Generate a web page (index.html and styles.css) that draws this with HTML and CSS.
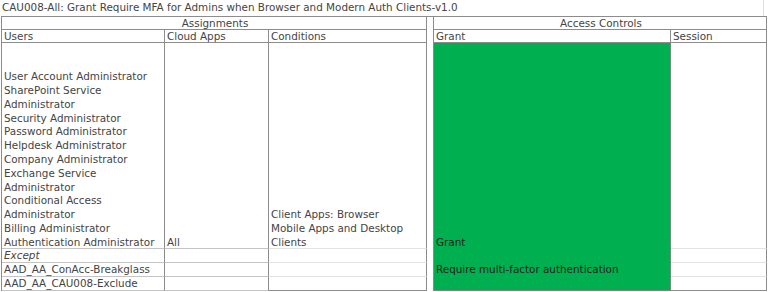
FILE: index.html
```html
<!DOCTYPE html>
<html>
<head>
<meta charset="utf-8">
<link rel="stylesheet" href="styles.css">
</head>
<body>
<div class="title">CAU008-All: Grant Require MFA for Admins when Browser and Modern Auth Clients-v1.0</div>
<div class="sheet">
  <div class="cell group span-assign">Assignments</div>
  <div class="gap"></div>
  <div class="cell group span-access">Access Controls</div>

  <div class="cell head">Users</div>
  <div class="cell head">Cloud Apps</div>
  <div class="cell head">Conditions</div>
  <div class="cell head">Grant</div>
  <div class="cell head">Session</div>

  <div class="cell main dark">
    <span>User Account Administrator</span>
    <span>SharePoint Service</span>
    <span>Administrator</span>
    <span>Security Administrator</span>
    <span>Password Administrator</span>
    <span>Helpdesk Administrator</span>
    <span>Company Administrator</span>
    <span>Exchange Service</span>
    <span>Administrator</span>
    <span>Conditional Access</span>
    <span>Administrator</span>
    <span>Billing Administrator</span>
    <span>Authentication Administrator</span>
  </div>
  <div class="cell main dark"><span>All</span></div>
  <div class="cell main light">
    <span>Client Apps: Browser</span>
    <span>Mobile Apps and Desktop</span>
    <span>Clients</span>
  </div>
  <div class="cell main green"><span>Grant</span></div>
  <div class="cell main light"></div>

  <div class="cell row dark italic">Except</div>
  <div class="cell row dark"></div>
  <div class="cell row light"></div>
  <div class="cell row green"></div>
  <div class="cell row light"></div>

  <div class="cell row dark">AAD_AA_ConAcc-Breakglass</div>
  <div class="cell row dark"></div>
  <div class="cell row light"></div>
  <div class="cell row green">Require multi-factor authentication</div>
  <div class="cell row light"></div>

  <div class="cell row dark last">AAD_AA_CAU008-Exclude</div>
  <div class="cell row dark last"></div>
  <div class="cell row light last"></div>
  <div class="cell row green last"></div>
  <div class="cell row light last"></div>
</div>
</body>
</html>
```

FILE: styles.css
```css
html, body {
  margin: 0;
  padding: 0;
  background: #ffffff;
}

body {
  font-family: "DejaVu Sans", sans-serif;
  font-size: 10.4px;
  color: #444444;
}

.title {
  height: 16px;
  line-height: 14px;
  padding-left: 2px;
  white-space: nowrap;
  width: 764px;
  box-sizing: border-box;
  border-right: 1px solid #dedede;
}

.sheet {
  display: grid;
  grid-template-columns: 163px 104px 158px 7px 237px 96px;
  grid-template-rows: 13px 13px 206px 14px 14px 14px;
  margin-left: 1px;
  width: max-content;
  border-left: 1px solid #8c8c8c;
  border-top: 1px solid #8c8c8c;
}

.cell {
  box-sizing: border-box;
  border-right: 1px solid #8c8c8c;
  border-bottom: 1px solid #8c8c8c;
  padding-left: 2px;
  white-space: nowrap;
  overflow: hidden;
}

.group {
  line-height: 13px;
  text-align: center;
}

.span-assign {
  grid-column: 1 / 4;
}

.span-access {
  grid-column: 5 / 7;
}

.gap {
  grid-column: 4;
  grid-row: 1 / -1;
  border-right: 1px solid #8c8c8c;
}

.head {
  line-height: 13px;
}

.main {
  display: flex;
  flex-direction: column;
  justify-content: flex-end;
  line-height: 13.8px;
}

.main span:last-child {
  margin-bottom: -1.5px;
}

.row {
  line-height: 13.4px;
  overflow: visible;
}

.row.dark,
.main.dark {
  border-bottom-color: #c4c4c4;
}

.light {
  border-bottom-color: #e3e3e3;
}

.green {
  background: #00b050;
  color: #1c1c1c;
  border-bottom-color: #00b050;
  border-right-color: #6f8f78;
}

.last {
  border-bottom-color: #8c8c8c;
}

.green.last {
  border-bottom-color: #7a8a7e;
}

.italic {
  font-style: italic;
}
```
